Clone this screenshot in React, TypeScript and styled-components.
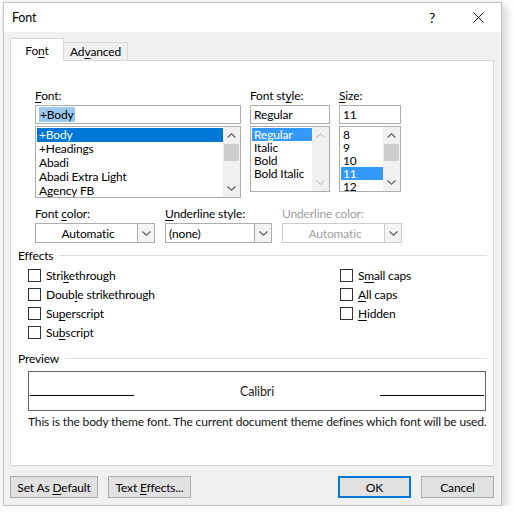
import React from 'react';
import styled, { createGlobalStyle } from 'styled-components';

const GlobalStyle = createGlobalStyle`
    html, body {
        margin: 0;
        padding: 0;
        background: #ffffff;
    }

    body {
        font-family: Lato, 'Noto Sans', sans-serif;
        font-size: 12px;
        letter-spacing: -0.15px;
        color: #000000;
    }

    * {
        box-sizing: border-box;
    }
`;

const Window = styled.div`
    margin: 2px 0 0 3px;
    width: 499px;
    height: 504px;
    display: flex;
    flex-direction: column;
    background: #f0f0f0;
    border: 1px solid #c4c4c4;
    box-shadow: 3px 3px 10px rgba(0, 0, 0, 0.22);
`;

const TitleBar = styled.div`
    height: 29px;
    display: flex;
    align-items: center;
    background: #ffffff;
    padding-left: 8px;
`;

const Title = styled.span`
    flex: 1;
    font-size: 12.5px;
`;

const TitleButton = styled.div`
    width: 46px;
    height: 29px;
    display: flex;
    align-items: center;
    justify-content: center;
    font-size: 14px;
`;

const Body = styled.div`
    flex: 1;
    display: flex;
    flex-direction: column;
    padding: 7px 7px 0 6px;
`;

const TabStrip = styled.div`
    display: flex;
    align-items: flex-end;
    height: 22px;
    position: relative;
    z-index: 1;
    margin-bottom: -1px;
`;

const Tab = styled.div<{ $active?: boolean; $width: number }>`
    width: ${(p) => p.$width}px;
    height: ${(p) => (p.$active ? 23 : 19)}px;
    display: flex;
    align-items: center;
    justify-content: center;
    padding-top: ${(p) => (p.$active ? 1 : 0)}px;
    background: ${(p) => (p.$active ? '#ffffff' : '#f0f0f0')};
    border: 1px solid #d9d9d9;
    border-bottom: ${(p) => (p.$active ? 'none' : '1px solid #d9d9d9')};
    border-left: ${(p) => (p.$active ? '1px solid #d9d9d9' : 'none')};
`;

const Panel = styled.div`
    height: 406px;
    background: #ffffff;
    border: 1px solid #d9d9d9;
    padding-top: 27px;
`;

const Key = styled.span`
    text-decoration: underline;
    text-underline-offset: 2px;
`;

const FieldGrid = styled.div`
    display: grid;
    grid-template-columns: 206px 80px 62px;
    column-gap: 9px;
    padding-left: 24px;
`;

const Field = styled.div`
    display: flex;
    flex-direction: column;
`;

const FieldLabel = styled.div<{ $disabled?: boolean }>`
    height: 16px;
    line-height: 16px;
    margin-bottom: 1px;
    color: ${(p) => (p.$disabled ? '#a0a0a0' : '#000000')};
`;

const TextInput = styled.div`
    height: 19px;
    border: 1px solid #adadad;
    display: flex;
    align-items: center;
    padding-left: 3px;
`;

const SelectedText = styled.span`
    background: #99c9ef;
    padding: 0 1px;
`;

const ListBox = styled.div<{ $height: number }>`
    height: ${(p) => p.$height}px;
    margin-top: 2px;
    border: 1px solid #adadad;
    display: flex;
    padding: 1px 0 0 1px;
    overflow: hidden;
`;

const ListItems = styled.div`
    flex: 1;
    display: flex;
    flex-direction: column;
    overflow: hidden;
`;

const ListItem = styled.div<{ $selected?: boolean; $tone?: 'focus' | 'soft'; $row: number }>`
    flex-shrink: 0;
    height: ${(p) => p.$row}px;
    line-height: ${(p) => p.$row}px;
    padding-left: 2px;
    white-space: nowrap;
    color: ${(p) => (p.$selected ? '#ffffff' : '#000000')};
    background: ${(p) => (!p.$selected ? 'transparent' : p.$tone === 'soft' ? '#3399ff' : '#0078d7')};
`;

const ScrollBar = styled.div`
    width: 17px;
    display: flex;
    flex-direction: column;
    background: #f0f0f0;
    margin-top: -1px;
`;

const ScrollArrow = styled.div`
    height: 17px;
    display: flex;
    align-items: center;
    justify-content: center;
`;

const ScrollThumb = styled.div`
    height: 17px;
    margin: 0 1px;
    background: #cdcdcd;
`;

const ScrollTrack = styled.div`
    flex: 1;
`;

const ComboGrid = styled.div`
    display: grid;
    grid-template-columns: 120px 107px 120px;
    column-gap: 10px;
    padding-left: 24px;
    margin-top: 8px;
`;

const Combo = styled.div<{ $disabled?: boolean }>`
    height: 20px;
    display: flex;
    border: 1px solid ${(p) => (p.$disabled ? '#cccccc' : '#adadad')};
    background: #ffffff;
    color: ${(p) => (p.$disabled ? '#a0a0a0' : '#000000')};
`;

const ComboText = styled.div<{ $center?: boolean }>`
    flex: 1;
    display: flex;
    align-items: center;
    justify-content: ${(p) => (p.$center ? 'center' : 'flex-start')};
    padding-left: 3px;
`;

const ComboButton = styled.div<{ $disabled?: boolean }>`
    width: 17px;
    display: flex;
    align-items: center;
    justify-content: center;
    border-left: 1px solid ${(p) => (p.$disabled ? '#cccccc' : '#adadad')};
    background: #f3f3f3;
`;

const Section = styled.div<{ $gap: number }>`
    padding: 0 6px 0 7px;
    margin-top: ${(p) => p.$gap}px;
`;

const SectionHeader = styled.div`
    display: flex;
    align-items: center;
    height: 16px;
`;

const SectionRule = styled.div`
    flex: 1;
    height: 1px;
    margin-left: 6px;
    background: #dcdcdc;
`;

const CheckGrid = styled.div`
    display: grid;
    grid-template-columns: 312px 1fr;
    padding-left: 10px;
    margin-top: 3px;
`;

const CheckColumn = styled.div`
    display: flex;
    flex-direction: column;
`;

const CheckRow = styled.div`
    height: 19px;
    display: flex;
    align-items: center;
    gap: 5px;
`;

const CheckBox = styled.div`
    width: 13px;
    height: 13px;
    border: 1px solid #333333;
    background: #ffffff;
`;

const PreviewBox = styled.div`
    height: 40px;
    margin: 5px 0 0 10px;
    width: 458px;
    border: 1px solid #646464;
    display: flex;
    align-items: center;
    justify-content: space-between;
    padding: 0 1px;
`;

const PreviewLine = styled.div`
    width: 104px;
    height: 1px;
    margin-top: 8px;
    background: #000000;
`;

const PreviewText = styled.div`
    font-size: 12.5px;
    color: #1e1e1e;
`;

const Note = styled.div`
    margin: 3px 0 0 10px;
    height: 16px;
    line-height: 16px;
    color: #141414;
    white-space: nowrap;
`;

const Footer = styled.div`
    display: flex;
    gap: 10px;
    margin-top: 10px;
`;

const Button = styled.div<{ $width: number; $primary?: boolean; $push?: boolean }>`
    width: ${(p) => p.$width}px;
    height: 22px;
    display: flex;
    align-items: center;
    justify-content: center;
    margin-left: ${(p) => (p.$push ? 'auto' : '0')};
    background: #e1e1e1;
    border: 1px solid ${(p) => (p.$primary ? '#0078d7' : '#adadad')};
    box-shadow: ${(p) => (p.$primary ? 'inset 0 0 0 1px #0078d7' : 'none')};
`;

const Chevron = ({ up, color = '#606060' }: { up?: boolean; color?: string }): React.ReactElement => (
    <svg width="9" height="5" viewBox="0 0 9 5">
        <polyline
            points={up ? '0.5,4.5 4.5,0.8 8.5,4.5' : '0.5,0.5 4.5,4.2 8.5,0.5'}
            fill="none"
            stroke={color}
            strokeWidth="1.2"
        />
    </svg>
);

const CloseIcon = (): React.ReactElement => (
    <svg width="11" height="11" viewBox="0 0 11 11">
        <path d="M0.5 0.5 L10.5 10.5 M10.5 0.5 L0.5 10.5" stroke="#1a1a1a" strokeWidth="1" />
    </svg>
);

interface ListProps {
    items: string[];
    selected: number;
    height: number;
    row: number;
    tone: 'focus' | 'soft';
    disabled?: boolean;
}

const List = ({ items, selected, height, row, tone, disabled }: ListProps): React.ReactElement => {
    const arrowColor = disabled ? '#c8c8c8' : '#606060';

    return (
        <ListBox $height={height}>
            <ListItems>
                {items.map((item, i) => (
                    <ListItem key={item} $row={row} $selected={i === selected} $tone={tone}>
                        {item}
                    </ListItem>
                ))}
            </ListItems>
            <ScrollBar>
                <ScrollArrow>
                    <Chevron up color={arrowColor} />
                </ScrollArrow>
                {!disabled && <ScrollThumb />}
                <ScrollTrack />
                <ScrollArrow>
                    <Chevron color={arrowColor} />
                </ScrollArrow>
            </ScrollBar>
        </ListBox>
    );
};

const leftEffects: React.ReactNode[] = [
    <>Stri<Key>k</Key>ethrough</>,
    <>Doub<Key>l</Key>e strikethrough</>,
    <>Su<Key>p</Key>erscript</>,
    <>Su<Key>b</Key>script</>,
];

const rightEffects: React.ReactNode[] = [
    <>S<Key>m</Key>all caps</>,
    <><Key>A</Key>ll caps</>,
    <><Key>H</Key>idden</>,
];

const App = (): React.ReactElement => {
    return (
        <>
            <GlobalStyle />
            <Window>
                <TitleBar>
                    <Title>Font</Title>
                    <TitleButton>?</TitleButton>
                    <TitleButton>
                        <CloseIcon />
                    </TitleButton>
                </TitleBar>
                <Body>
                    <TabStrip>
                        <Tab $active $width={54}>
                            <span>Fo<Key>n</Key>t</span>
                        </Tab>
                        <Tab $width={64}>
                            <span>Ad<Key>v</Key>anced</span>
                        </Tab>
                    </TabStrip>
                    <Panel>
                        <FieldGrid>
                            <Field>
                                <FieldLabel>
                                    <Key>F</Key>ont:
                                </FieldLabel>
                                <TextInput>
                                    <SelectedText>+Body</SelectedText>
                                </TextInput>
                                <List
                                    items={['+Body', '+Headings', 'Abadi', 'Abadi Extra Light', 'Agency FB']}
                                    selected={0}
                                    height={72}
                                    row={14}
                                    tone="focus"
                                />
                            </Field>
                            <Field>
                                <FieldLabel>
                                    Font st<Key>y</Key>le:
                                </FieldLabel>
                                <TextInput>Regular</TextInput>
                                <List
                                    items={['Regular', 'Italic', 'Bold', 'Bold Italic']}
                                    selected={0}
                                    height={66}
                                    row={13}
                                    tone="soft"
                                    disabled
                                />
                            </Field>
                            <Field>
                                <FieldLabel>
                                    <Key>S</Key>ize:
                                </FieldLabel>
                                <TextInput>11</TextInput>
                                <List
                                    items={['8', '9', '10', '11', '12']}
                                    selected={3}
                                    height={66}
                                    row={13}
                                    tone="soft"
                                />
                            </Field>
                        </FieldGrid>
                        <ComboGrid>
                            <Field>
                                <FieldLabel>
                                    Font <Key>c</Key>olor:
                                </FieldLabel>
                                <Combo>
                                    <ComboText $center>Automatic</ComboText>
                                    <ComboButton>
                                        <Chevron />
                                    </ComboButton>
                                </Combo>
                            </Field>
                            <Field>
                                <FieldLabel>
                                    <Key>U</Key>nderline style:
                                </FieldLabel>
                                <Combo>
                                    <ComboText>(none)</ComboText>
                                    <ComboButton>
                                        <Chevron />
                                    </ComboButton>
                                </Combo>
                            </Field>
                            <Field>
                                <FieldLabel $disabled>Underline color:</FieldLabel>
                                <Combo $disabled>
                                    <ComboText $center>Automatic</ComboText>
                                    <ComboButton $disabled>
                                        <Chevron />
                                    </ComboButton>
                                </Combo>
                            </Field>
                        </ComboGrid>
                        <Section $gap={4}>
                            <SectionHeader>
                                <span>Effects</span>
                                <SectionRule />
                            </SectionHeader>
                            <CheckGrid>
                                <CheckColumn>
                                    {leftEffects.map((label, i) => (
                                        <CheckRow key={`left-${i}`}>
                                            <CheckBox />
                                            <span>{label}</span>
                                        </CheckRow>
                                    ))}
                                </CheckColumn>
                                <CheckColumn>
                                    {rightEffects.map((label, i) => (
                                        <CheckRow key={`right-${i}`}>
                                            <CheckBox />
                                            <span>{label}</span>
                                        </CheckRow>
                                    ))}
                                </CheckColumn>
                            </CheckGrid>
                        </Section>
                        <Section $gap={8}>
                            <SectionHeader>
                                <span>Preview</span>
                                <SectionRule />
                            </SectionHeader>
                            <PreviewBox>
                                <PreviewLine />
                                <PreviewText>Calibri</PreviewText>
                                <PreviewLine />
                            </PreviewBox>
                            <Note>
                                This is the body theme font. The current document theme defines which font will be used.
                            </Note>
                        </Section>
                    </Panel>
                    <Footer>
                        <Button $width={88}>
                            <span>Set As <Key>D</Key>efault</span>
                        </Button>
                        <Button $width={83}>
                            <span>Text <Key>E</Key>ffects...</span>
                        </Button>
                        <Button $width={73} $primary $push>
                            <span>OK</span>
                        </Button>
                        <Button $width={73}>
                            <span>Cancel</span>
                        </Button>
                    </Footer>
                </Body>
            </Window>
        </>
    );
};

export default App;
